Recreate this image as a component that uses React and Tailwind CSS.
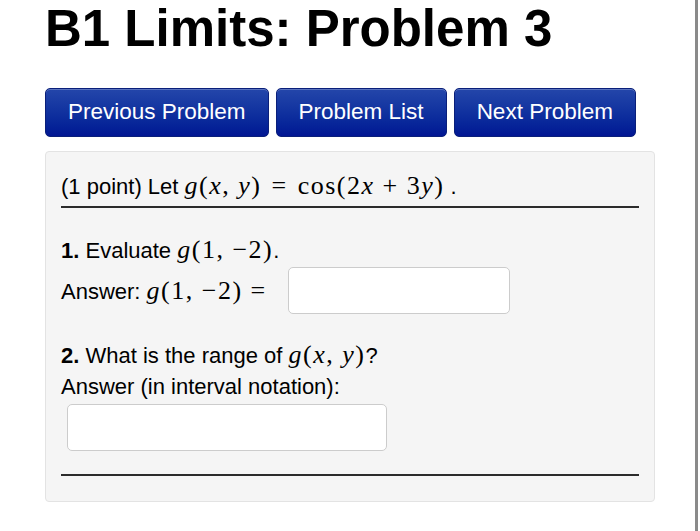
import React from 'react'

// inline TeX-ish math, set in a serif face
function M({ children }) {
  return (
    <span
      className="text-[26px] leading-[32px] tracking-[1.5px]"
      style={{ fontFamily: '"Liberation Serif", "DejaVu Serif", serif' }}
    >
      {children}
    </span>
  )
}

const V = ({ children }) => <i>{children}</i>

function NavButton({ label }) {
  return (
    <button className="h-[49px] px-[22px] rounded-[5px] border border-[#0a1f7a] bg-gradient-to-b from-[#2446aa] to-[#021693] text-white text-[22.5px] leading-none shadow-[inset_0_1px_0_rgba(255,255,255,0.25)]">
      {label}
    </button>
  )
}

export default function App() {
  return (
    <div
      className="w-[700px] h-[531px] bg-white flex text-black overflow-hidden"
      style={{ fontFamily: '"Liberation Sans", Arial, sans-serif' }}
    >
      <div className="w-[695px] pl-[45px]">
        <h1 className="text-[51px] leading-[57px] font-bold">B1 Limits: Problem 3</h1>

        <div className="mt-[31px] flex gap-[7px]">
          <NavButton label="Previous Problem" />
          <NavButton label="Problem List" />
          <NavButton label="Next Problem" />
        </div>

        <div className="mt-[14px] w-[610px] h-[351px] rounded-[4px] border border-[#e3e3e3] bg-[#f5f5f5] pt-[18px] px-[15px] text-[22px] leading-[32px]">
          <div className="h-[32px] whitespace-nowrap">
            (1 point) Let{' '}
            <M>
              <V>g</V>(<V>x</V>, <V>y</V>)<span className="mx-[10px]">=</span>cos(2<V>x</V>
              <span className="mx-[8px]">+</span>3<V>y</V>)
            </M>{' '}
            .
          </div>
          <div className="mt-[4px] h-[2px] bg-[#2b2b2b]" />

          <div className="mt-[26px] h-[32px] whitespace-nowrap">
            <b>1.</b> Evaluate{' '}
            <M>
              <V>g</V>(1, −2)
            </M>
            .
          </div>
          <div className="mt-[1px] flex items-center">
            <div className="h-[32px] whitespace-nowrap">
              Answer:{' '}
              <M>
                <V>g</V>(1, −2)<span className="ml-[8px]">=</span>
              </M>
            </div>
            <div className="ml-[21px] w-[222px] h-[47px] rounded-[5px] border border-[#cccccc] bg-white" />
          </div>

          <div className="mt-[25px] h-[32px] whitespace-nowrap">
            <b>2.</b> What is the range of{' '}
            <M>
              <V>g</V>(<V>x</V>, <V>y</V>)
            </M>
            ?
          </div>
          <div className="h-[32px]">Answer (in interval notation):</div>
          <div className="mt-[1px] ml-[6px] w-[320px] h-[47px] rounded-[5px] border border-[#cccccc] bg-white" />

          <div className="mt-[23px] h-[2px] bg-[#2b2b2b]" />
        </div>
      </div>
      <div className="w-[3px] h-full bg-[#8a8a8a]" />
    </div>
  )
}
